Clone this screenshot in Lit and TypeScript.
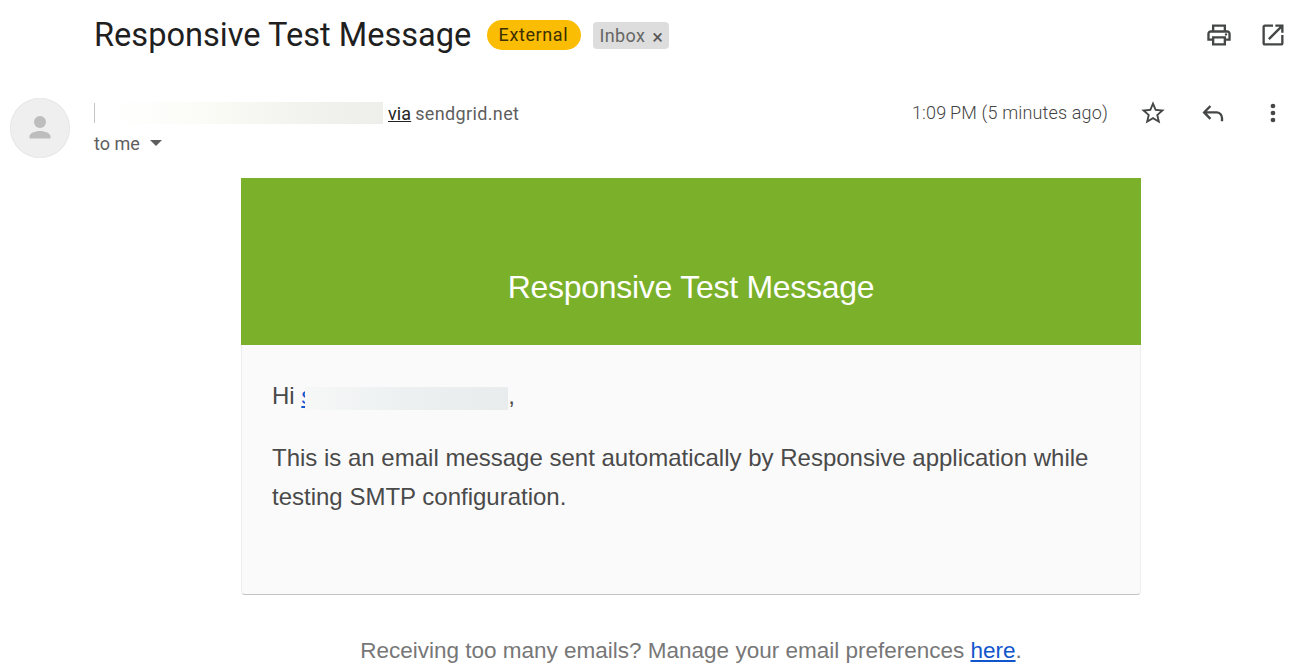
import { LitElement, html, css } from "lit";
import { customElement } from "lit/decorators.js";

@customElement("app-root")
export class AppRoot extends LitElement {
  static styles = css`
    :host { display: block; width: 1311px; height: 671px; overflow: hidden; background: #fff; font-family: Roboto, sans-serif; color: #5e5e5e; }
    .subject { display: flex; align-items: center; height: 70px; padding: 0 20px 0 94px; }
    h1 { margin: 0; font: 400 32.6px/70px Roboto, sans-serif; color: #1f1f1f; }
    .ext { margin-left: 16px; height: 30px; width: 94px; border-radius: 15px; background: #fbbc04; color: #3c2f00; font-size: 18px; display: flex; align-items: center; justify-content: center; letter-spacing: .6px; padding: 0 2px 1px 0; box-sizing: border-box; }
    .inbox { margin-left: 12px; height: 27px; width: 76px; border-radius: 4px; background: #dddddd; color: #666; font-size: 18px; display: flex; align-items: center; padding-left: 6px; box-sizing: border-box; gap: 7px; letter-spacing: .4px; }
    .inbox span { font-size: 20px; color: #555; padding-top: 3px; }
    .spacer { flex: 1; }
    .top-icons { display: flex; gap: 30px; padding-right: 6px; }
    svg { display: block; fill: #444746; }
    .sender { display: flex; height: 108px; padding-left: 10px; }
    .avatar { width: 60px; height: 60px; margin-top: 28px; border-radius: 50%; background: #efefef; display: flex; align-items: center; justify-content: center; box-shadow: inset 0 0 0 1px #e8e8e8; }
    .avatar svg { fill: #bdbdbd; }
    .who { margin-left: 24px; padding-top: 28px; flex: 1; }
    .line1 { display: flex; align-items: center; height: 30px; font-size: 18px; letter-spacing: .36px; }
    .cursor { width: 1px; height: 20px; background: #c4c4c4; }
    .blur { width: 270px; height: 22px; margin: 0 5px 0 18px; background: linear-gradient(90deg, #fff, #fafaf5 40%, #f0f0ec 80%, #eeeeea); }
    .via { text-decoration: underline; color: #222; margin-right: 4px; letter-spacing: .1px; }
    .line2 { display: flex; align-items: center; height: 30px; font-size: 18px; gap: 10px; }
    .caret { width: 0; height: 0; border: 6px solid transparent; border-top-color: #5e5e5e; border-bottom-width: 0; }
    .meta { display: flex; align-items: flex-start; padding-top: 28px; padding-right: 26px; }
    .time { font-size: 18px; line-height: 30px; margin-right: 33px; font-weight: 300; letter-spacing: .15px; color: #444; }
    .actions { display: flex; gap: 36px; padding-top: 3px; }
    .card { width: 900px; margin-left: 241px; }
    .banner { height: 167px; background: #7bb02a; color: #fff; font: 32px "Liberation Sans", Arial, sans-serif; letter-spacing: -.27px; display: flex; justify-content: center; align-items: flex-end; padding-bottom: 39px; box-sizing: border-box; }
    .body { height: 250px; box-sizing: border-box; background: #fafafa; border-bottom: 1px solid #c4c4c4; border-left: 1px solid #eee; border-right: 1px solid #eee; border-radius: 0 0 4px 4px; padding: 31px 30px 0; font: 24px/39px "Liberation Sans", Arial, sans-serif; color: #4a4a4a; }
    .body p { margin: 0 0 23px; }
    .hi { display: flex; }
    .link { color: #1155cc; text-decoration: underline; }
    .blur2 { width: 203px; height: 23px; margin: 11px 0 0 -8px; background: linear-gradient(90deg, #f6f8f8, #edf0f0 50%, #e9ecec); }
    .footer { margin-top: 37px; text-align: center; width: 1382px; font: 22.5px/38px "Liberation Sans", Arial, sans-serif; color: #777; }
  `;

  render() {
    return html`
      <div class="subject">
        <h1>Responsive Test Message</h1>
        <div class="ext">External</div>
        <div class="inbox">Inbox <span>×</span></div>
        <div class="spacer"></div>
        <div class="top-icons">
          <svg width="24" height="24" viewBox="0 0 24 24" style="transform:scale(1.17)"><path d="M19 8h-1V3H6v5H5c-1.66 0-3 1.34-3 3v6h4v4h12v-4h4v-6c0-1.66-1.34-3-3-3zM8 5h8v3H8V5zm8 14H8v-4h8v4zm2-4v-2H6v2H4v-4c0-.55.45-1 1-1h14c.55 0 1 .45 1 1v4h-2z"/><circle cx="18" cy="11.5" r="1"/></svg>
          <svg width="24" height="24" viewBox="0 0 24 24" style="transform:scale(1.17)"><path d="M19 19H5V5h7V3H5c-1.1 0-2 .9-2 2v14c0 1.1.9 2 2 2h14c1.1 0 2-.9 2-2v-7h-2v7zM14 3v2h3.59l-9.83 9.83 1.41 1.41L19 6.41V10h2V3h-7z"/></svg>
        </div>
      </div>
      <div class="sender">
        <div class="avatar"><svg width="36" height="36" viewBox="0 0 24 24"><circle cx="12" cy="8" r="4"/><path d="M12 14c-3.3 0-7 1.6-7 3.5V19h14v-1.5C19 15.6 15.3 14 12 14z"/></svg></div>
        <div class="who">
          <div class="line1"><div class="cursor"></div><div class="blur"></div><span class="via">via</span> sendgrid.net</div>
          <div class="line2">to me <div class="caret"></div></div>
        </div>
        <div class="meta">
          <div class="time">1:09\u2009PM (5 minutes ago)</div>
          <div class="actions">
            <svg width="24" height="24" viewBox="0 0 24 24" style="transform:scale(1.17)"><path d="M22 9.24l-7.19-.62L12 2 9.19 8.63 2 9.24l5.46 4.73L5.82 21 12 17.27 18.18 21l-1.63-7.03L22 9.24zM12 15.4l-3.76 2.27 1-4.28-3.32-2.88 4.38-.38L12 6.1l1.71 4.04 4.38.38-3.32 2.88 1 4.28L12 15.4z"/></svg>
            <svg width="24" height="24" viewBox="0 0 24 24" style="transform:scale(1.17)"><path d="M9.8 6 4.4 11.5 9.8 17M5 11.5H15a4.7 4.7 0 0 1 4.7 4.7V19" fill="none" stroke="#444746" stroke-width="2"/></svg>
            <svg width="24" height="24" viewBox="0 0 24 24" style="transform:scale(1.17)"><circle cx="12" cy="6" r="2"/><circle cx="12" cy="12" r="2"/><circle cx="12" cy="18" r="2"/></svg>
          </div>
        </div>
      </div>
      <div class="card">
        <div class="banner">Responsive Test Message</div>
        <div class="body">
          <p class="hi">Hi&nbsp;<span class="link">s</span><span class="blur2"></span>,</p>
          <p>This is an email message sent automatically by Responsive application while testing SMTP configuration.</p>
        </div>
      </div>
      <div class="footer">Receiving too many emails? Manage your email preferences <span class="link">here</span>.</div>
    `;
  }
}
